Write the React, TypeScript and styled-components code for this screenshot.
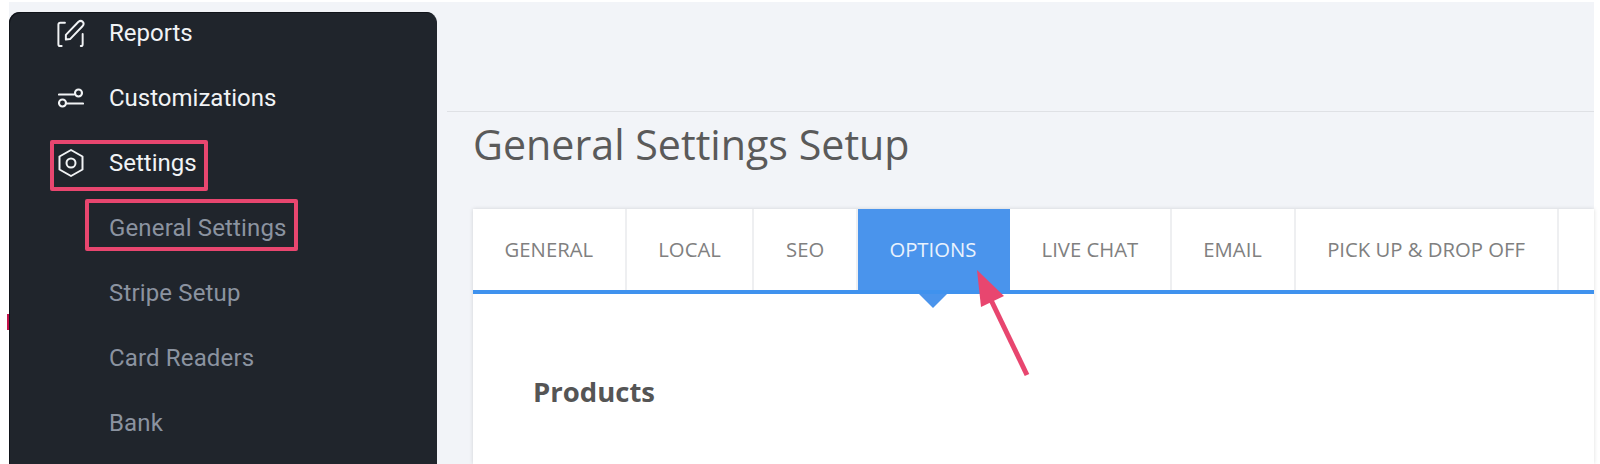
import styled, { createGlobalStyle } from "styled-components";

const GlobalStyle = createGlobalStyle`
  html, body {
    margin: 0;
    padding: 0;
    background: #fff;
  }
  * {
    box-sizing: border-box;
  }
`;

const Page = styled.div`
  position: relative;
  width: 1600px;
  height: 464px;
  padding: 2px 6px 0 9px;
  overflow: hidden;
  background: #fff;
`;

const Frame = styled.div`
  display: flex;
  height: 100%;
  background: #f2f4f8;
`;

const Sidebar = styled.nav`
  flex: 0 0 428px;
  margin-top: 10px;
  overflow: hidden;
  background: #20252c;
  border-radius: 11px 11px 0 0;
  box-shadow: inset 1px 1px 0 #11141a;
  font-family: Roboto, "Noto Sans", sans-serif;
  font-size: 24px;
`;

const NavList = styled.ul`
  list-style: none;
  margin: -11.5px 0 0;
  padding: 0;
`;

const NavItem = styled.li<{ $sub?: boolean }>`
  display: flex;
  align-items: center;
  gap: 24px;
  height: 65px;
  padding-left: ${(p) => (p.$sub ? "100px" : "48px")};
  color: ${(p) => (p.$sub ? "#8b93a0" : "#f1f3f5")};
  letter-spacing: ${(p) => (p.$sub ? "0.15px" : "0")};
`;

const IconSlot = styled.span`
  display: flex;
  justify-content: center;
  width: 28px;
`;

const Main = styled.main`
  flex: 1;
  min-width: 0;
  display: flex;
  flex-direction: column;
`;

const TopBar = styled.div`
  flex: 0 0 110px;
  margin-left: 10px;
  border-bottom: 1px solid #dfe1e5;
`;

const Title = styled.h1`
  margin: 0 0 32px 36px;
  font-family: "Open Sans", sans-serif;
  font-size: 41.2px;
  font-weight: 400;
  line-height: 65px;
  color: #5a5a5a;
`;

const Card = styled.section`
  flex: 1;
  margin-left: 36px;
  background: #fff;
  box-shadow: 0 0 4px rgba(0, 0, 0, 0.14);
`;

const Tabs = styled.div`
  display: flex;
  height: 85px;
  border-bottom: 4px solid #3f92ee;
`;

const Tab = styled.div<{ $active?: boolean }>`
  position: relative;
  display: flex;
  align-items: center;
  padding: 0 31.6px 2px;
  font-family: "Open Sans", sans-serif;
  font-size: 20.3px;
  color: ${(p) => (p.$active ? "#e9f2fd" : "#808080")};
  background: ${(p) => (p.$active ? "#4a94ec" : "transparent")};
  border-right: 2px solid ${(p) => (p.$active ? "#4a94ec" : "#eeeff1")};

  ${(p) =>
    p.$active &&
    `
    &::after {
      content: "";
      position: absolute;
      left: 50%;
      top: 100%;
      margin: 4px 0 0 -14px;
      border-left: 14px solid transparent;
      border-right: 14px solid transparent;
      border-top: 14px solid #4a94ec;
    }
  `}
`;

const SectionTitle = styled.h2`
  margin: 0;
  padding: 80px 0 0 60px;
  font-family: "Open Sans", sans-serif;
  font-size: 27.5px;
  font-weight: 700;
  line-height: 36px;
  color: #555;
`;

const Highlight = styled.div<{ $x: number; $y: number; $w: number; $h: number }>`
  position: absolute;
  left: ${(p) => p.$x}px;
  top: ${(p) => p.$y}px;
  width: ${(p) => p.$w}px;
  height: ${(p) => p.$h}px;
  border: 4px solid #e8466f;
  border-radius: 2px;
`;

const EdgeMark = styled.div`
  position: absolute;
  left: 7px;
  top: 314px;
  width: 2px;
  height: 16px;
  background: #c2124a;
`;

const ArrowSvg = styled.svg`
  position: absolute;
  left: 973px;
  top: 267px;
`;

function ReportsIcon() {
  return (
    <svg width="30" height="32" viewBox="0 0 30 32" fill="none" stroke="#f1f3f5" strokeWidth="2.1" strokeLinecap="round" strokeLinejoin="round">
      <path d="M8.5 5H3.5Q1.5 5 1.5 7V28Q1.5 30 3.5 30H5" />
      <path d="M27.5 17V28Q27.5 30 25.5 30" />
      <path d="M9.5 23V18L23 4Q25.5 2 27.5 4T27.5 8.5L14 22.5Z" />
    </svg>
  );
}

function SlidersIcon() {
  return (
    <svg width="26" height="20" viewBox="0 0 26 20" fill="none" stroke="#f1f3f5" strokeWidth="2.1" strokeLinecap="round">
      <path d="M1 6.5H16" />
      <circle cx="20.5" cy="5" r="3.5" />
      <circle cx="4.5" cy="15" r="3.5" />
      <path d="M9 15.5H25" />
    </svg>
  );
}

function HexIcon() {
  return (
    <svg width="26" height="28" viewBox="0 0 26 28" fill="none" stroke="#f1f3f5" strokeWidth="2" strokeLinejoin="round">
      <path d="M13 1L24.5 7.5V20.5L13 27L1.5 20.5V7.5Z" />
      <circle cx="13" cy="14" r="4.5" />
    </svg>
  );
}

const tabs = ["GENERAL", "LOCAL", "SEO", "OPTIONS", "LIVE CHAT", "EMAIL", "PICK UP & DROP OFF"];

export default function App() {
  return (
    <Page>
      <GlobalStyle />
      <Frame>
        <Sidebar>
          <NavList>
            <NavItem>
              <IconSlot><ReportsIcon /></IconSlot>
              Reports
            </NavItem>
            <NavItem>
              <IconSlot><SlidersIcon /></IconSlot>
              Customizations
            </NavItem>
            <NavItem>
              <IconSlot><HexIcon /></IconSlot>
              Settings
            </NavItem>
            <NavItem $sub>General Settings</NavItem>
            <NavItem $sub>Stripe Setup</NavItem>
            <NavItem $sub>Card Readers</NavItem>
            <NavItem $sub>Bank</NavItem>
          </NavList>
        </Sidebar>
        <Main>
          <TopBar />
          <Title>General Settings Setup</Title>
          <Card>
            <Tabs>
              {tabs.map((t) => (
                <Tab key={t} $active={t === "OPTIONS"}>{t}</Tab>
              ))}
            </Tabs>
            <SectionTitle>Products</SectionTitle>
          </Card>
        </Main>
      </Frame>

      <EdgeMark />
      <Highlight $x={50} $y={140} $w={158} $h={51} />
      <Highlight $x={85} $y={199} $w={213} $h={52} />
      <ArrowSvg width="60" height="115" viewBox="0 0 60 115" fill="none">
        <path d="M4 3L8 40L31 29Z" fill="#e8466f" />
        <path d="M18 33L54 108" stroke="#e8466f" strokeWidth="5" />
      </ArrowSvg>
    </Page>
  );
}
